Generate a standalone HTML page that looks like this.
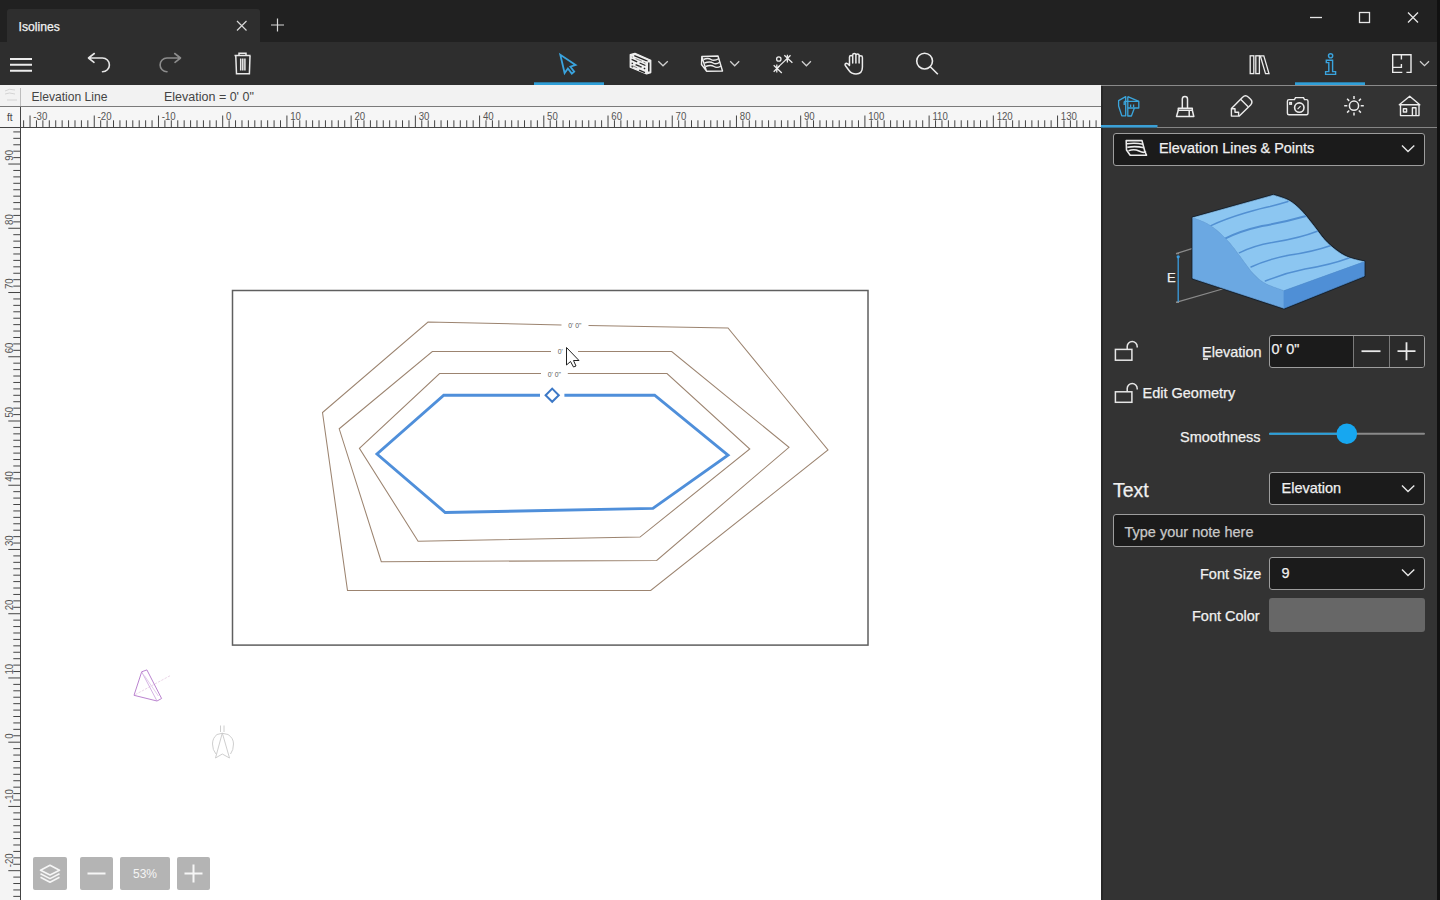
<!DOCTYPE html>
<html><head><meta charset="utf-8"><title>Isolines</title>
<style>
*{box-sizing:border-box;margin:0;padding:0}
html,body{width:1440px;height:900px;overflow:hidden;background:#202020;font-family:"Liberation Sans",sans-serif}
.abs{position:absolute}
#titlebar{position:absolute;left:0;top:0;width:1440px;height:42px;background:#212121}
#tab{position:absolute;left:7px;top:9px;width:253px;height:34px;background:#2e2e2e;border-radius:3px 3px 0 0}
#toolbar{position:absolute;left:0;top:42px;width:1440px;height:43px;background:#2e2e2e}
#canvasarea{position:absolute;left:0;top:85px;width:1101px;height:815px;background:#fff;overflow:hidden}
#panel{position:absolute;left:1101px;top:85px;width:336px;height:815px;background:#333}
#rightedge{position:absolute;left:1437px;top:0;width:3px;height:900px;background:#111}
.lbl{position:absolute;color:#f0f0f0;font-size:14.5px;white-space:nowrap;-webkit-text-stroke:0.25px currentColor}
.dd{position:absolute;background:#1b1b1b;border:1px solid #9d9d9d;border-radius:3px}
svg{position:absolute;overflow:visible}
</style></head><body>
<div id="titlebar"></div>
<div id="tab"></div>
<div class="lbl" style="left:18.5px;top:19.5px;font-size:12.2px;color:#f2f2f2">Isolines</div>
<svg style="left:0;top:0" width="1440" height="42">
 <g stroke="#d8d8d8" stroke-width="1.2" fill="none">
  <path d="M237 21 L246.5 30.5 M246.5 21 L237 30.5"/>
  <path d="M277.5 18.5 V31.5 M271 25 H284"/>
 </g>
 <g stroke="#e6e6e6" stroke-width="1.3" fill="none">
  <path d="M1310 17.5 H1322"/>
  <rect x="1359.5" y="12.5" width="10" height="10"/>
  <path d="M1408 12.5 L1418 22.5 M1418 12.5 L1408 22.5"/>
 </g>
</svg>
<div id="toolbar"></div>
<div id="canvasarea">
<svg style="left:0;top:-85px" width="1101" height="900">
 <rect x="0" y="85" width="1101" height="22" fill="#f2f2f2"/>
 <rect x="0" y="107" width="1101" height="21" fill="#f6f6f6"/>
 <rect x="0" y="128" width="20.5" height="772" fill="#f4f4f4"/>
 <line x1="0" y1="106.5" x2="1101" y2="106.5" stroke="#7a7a7a" stroke-width="1"/>
 <line x1="0" y1="127.5" x2="1101" y2="127.5" stroke="#444" stroke-width="1"/>
 <line x1="20.5" y1="107" x2="20.5" y2="900" stroke="#444" stroke-width="1"/>
 <line x1="20.5" y1="88" x2="20.5" y2="106" stroke="#bdbdbd" stroke-width="1"/>
 <text x="31.5" y="101" font-size="12.1" fill="#444">Elevation Line</text>
 <text x="164" y="101" font-size="12.5" fill="#444">Elevation = 0' 0"</text>
 <text x="7" y="121" font-size="10" fill="#444">ft</text>
 <g font-family="Liberation Sans">
 <line x1="23.62" y1="120.3" x2="23.62" y2="128" stroke="#444" stroke-width="1"/>
<line x1="30.04" y1="115.5" x2="30.04" y2="128" stroke="#444" stroke-width="1"/>
<text transform="translate(33.34 120.3) scale(0.84 1)" font-size="11.5" fill="#555">-30</text>
<line x1="36.46" y1="120.3" x2="36.46" y2="128" stroke="#444" stroke-width="1"/>
<line x1="42.88" y1="120.3" x2="42.88" y2="128" stroke="#444" stroke-width="1"/>
<line x1="49.31" y1="120.3" x2="49.31" y2="128" stroke="#444" stroke-width="1"/>
<line x1="55.73" y1="120.3" x2="55.73" y2="128" stroke="#444" stroke-width="1"/>
<line x1="62.15" y1="120.3" x2="62.15" y2="128" stroke="#444" stroke-width="1"/>
<line x1="68.57" y1="120.3" x2="68.57" y2="128" stroke="#444" stroke-width="1"/>
<line x1="74.99" y1="120.3" x2="74.99" y2="128" stroke="#444" stroke-width="1"/>
<line x1="81.42" y1="120.3" x2="81.42" y2="128" stroke="#444" stroke-width="1"/>
<line x1="87.84" y1="120.3" x2="87.84" y2="128" stroke="#444" stroke-width="1"/>
<line x1="94.26" y1="115.5" x2="94.26" y2="128" stroke="#444" stroke-width="1"/>
<text transform="translate(97.56 120.3) scale(0.84 1)" font-size="11.5" fill="#555">-20</text>
<line x1="100.68" y1="120.3" x2="100.68" y2="128" stroke="#444" stroke-width="1"/>
<line x1="107.10" y1="120.3" x2="107.10" y2="128" stroke="#444" stroke-width="1"/>
<line x1="113.53" y1="120.3" x2="113.53" y2="128" stroke="#444" stroke-width="1"/>
<line x1="119.95" y1="120.3" x2="119.95" y2="128" stroke="#444" stroke-width="1"/>
<line x1="126.37" y1="120.3" x2="126.37" y2="128" stroke="#444" stroke-width="1"/>
<line x1="132.79" y1="120.3" x2="132.79" y2="128" stroke="#444" stroke-width="1"/>
<line x1="139.21" y1="120.3" x2="139.21" y2="128" stroke="#444" stroke-width="1"/>
<line x1="145.64" y1="120.3" x2="145.64" y2="128" stroke="#444" stroke-width="1"/>
<line x1="152.06" y1="120.3" x2="152.06" y2="128" stroke="#444" stroke-width="1"/>
<line x1="158.48" y1="115.5" x2="158.48" y2="128" stroke="#444" stroke-width="1"/>
<text transform="translate(161.78 120.3) scale(0.84 1)" font-size="11.5" fill="#555">-10</text>
<line x1="164.90" y1="120.3" x2="164.90" y2="128" stroke="#444" stroke-width="1"/>
<line x1="171.32" y1="120.3" x2="171.32" y2="128" stroke="#444" stroke-width="1"/>
<line x1="177.75" y1="120.3" x2="177.75" y2="128" stroke="#444" stroke-width="1"/>
<line x1="184.17" y1="120.3" x2="184.17" y2="128" stroke="#444" stroke-width="1"/>
<line x1="190.59" y1="120.3" x2="190.59" y2="128" stroke="#444" stroke-width="1"/>
<line x1="197.01" y1="120.3" x2="197.01" y2="128" stroke="#444" stroke-width="1"/>
<line x1="203.43" y1="120.3" x2="203.43" y2="128" stroke="#444" stroke-width="1"/>
<line x1="209.86" y1="120.3" x2="209.86" y2="128" stroke="#444" stroke-width="1"/>
<line x1="216.28" y1="120.3" x2="216.28" y2="128" stroke="#444" stroke-width="1"/>
<line x1="222.70" y1="115.5" x2="222.70" y2="128" stroke="#444" stroke-width="1"/>
<text transform="translate(226.00 120.3) scale(0.84 1)" font-size="11.5" fill="#555">0</text>
<line x1="229.12" y1="120.3" x2="229.12" y2="128" stroke="#444" stroke-width="1"/>
<line x1="235.54" y1="120.3" x2="235.54" y2="128" stroke="#444" stroke-width="1"/>
<line x1="241.97" y1="120.3" x2="241.97" y2="128" stroke="#444" stroke-width="1"/>
<line x1="248.39" y1="120.3" x2="248.39" y2="128" stroke="#444" stroke-width="1"/>
<line x1="254.81" y1="120.3" x2="254.81" y2="128" stroke="#444" stroke-width="1"/>
<line x1="261.23" y1="120.3" x2="261.23" y2="128" stroke="#444" stroke-width="1"/>
<line x1="267.65" y1="120.3" x2="267.65" y2="128" stroke="#444" stroke-width="1"/>
<line x1="274.08" y1="120.3" x2="274.08" y2="128" stroke="#444" stroke-width="1"/>
<line x1="280.50" y1="120.3" x2="280.50" y2="128" stroke="#444" stroke-width="1"/>
<line x1="286.92" y1="115.5" x2="286.92" y2="128" stroke="#444" stroke-width="1"/>
<text transform="translate(290.22 120.3) scale(0.84 1)" font-size="11.5" fill="#555">10</text>
<line x1="293.34" y1="120.3" x2="293.34" y2="128" stroke="#444" stroke-width="1"/>
<line x1="299.76" y1="120.3" x2="299.76" y2="128" stroke="#444" stroke-width="1"/>
<line x1="306.19" y1="120.3" x2="306.19" y2="128" stroke="#444" stroke-width="1"/>
<line x1="312.61" y1="120.3" x2="312.61" y2="128" stroke="#444" stroke-width="1"/>
<line x1="319.03" y1="120.3" x2="319.03" y2="128" stroke="#444" stroke-width="1"/>
<line x1="325.45" y1="120.3" x2="325.45" y2="128" stroke="#444" stroke-width="1"/>
<line x1="331.87" y1="120.3" x2="331.87" y2="128" stroke="#444" stroke-width="1"/>
<line x1="338.30" y1="120.3" x2="338.30" y2="128" stroke="#444" stroke-width="1"/>
<line x1="344.72" y1="120.3" x2="344.72" y2="128" stroke="#444" stroke-width="1"/>
<line x1="351.14" y1="115.5" x2="351.14" y2="128" stroke="#444" stroke-width="1"/>
<text transform="translate(354.44 120.3) scale(0.84 1)" font-size="11.5" fill="#555">20</text>
<line x1="357.56" y1="120.3" x2="357.56" y2="128" stroke="#444" stroke-width="1"/>
<line x1="363.98" y1="120.3" x2="363.98" y2="128" stroke="#444" stroke-width="1"/>
<line x1="370.41" y1="120.3" x2="370.41" y2="128" stroke="#444" stroke-width="1"/>
<line x1="376.83" y1="120.3" x2="376.83" y2="128" stroke="#444" stroke-width="1"/>
<line x1="383.25" y1="120.3" x2="383.25" y2="128" stroke="#444" stroke-width="1"/>
<line x1="389.67" y1="120.3" x2="389.67" y2="128" stroke="#444" stroke-width="1"/>
<line x1="396.09" y1="120.3" x2="396.09" y2="128" stroke="#444" stroke-width="1"/>
<line x1="402.52" y1="120.3" x2="402.52" y2="128" stroke="#444" stroke-width="1"/>
<line x1="408.94" y1="120.3" x2="408.94" y2="128" stroke="#444" stroke-width="1"/>
<line x1="415.36" y1="115.5" x2="415.36" y2="128" stroke="#444" stroke-width="1"/>
<text transform="translate(418.66 120.3) scale(0.84 1)" font-size="11.5" fill="#555">30</text>
<line x1="421.78" y1="120.3" x2="421.78" y2="128" stroke="#444" stroke-width="1"/>
<line x1="428.20" y1="120.3" x2="428.20" y2="128" stroke="#444" stroke-width="1"/>
<line x1="434.63" y1="120.3" x2="434.63" y2="128" stroke="#444" stroke-width="1"/>
<line x1="441.05" y1="120.3" x2="441.05" y2="128" stroke="#444" stroke-width="1"/>
<line x1="447.47" y1="120.3" x2="447.47" y2="128" stroke="#444" stroke-width="1"/>
<line x1="453.89" y1="120.3" x2="453.89" y2="128" stroke="#444" stroke-width="1"/>
<line x1="460.31" y1="120.3" x2="460.31" y2="128" stroke="#444" stroke-width="1"/>
<line x1="466.74" y1="120.3" x2="466.74" y2="128" stroke="#444" stroke-width="1"/>
<line x1="473.16" y1="120.3" x2="473.16" y2="128" stroke="#444" stroke-width="1"/>
<line x1="479.58" y1="115.5" x2="479.58" y2="128" stroke="#444" stroke-width="1"/>
<text transform="translate(482.88 120.3) scale(0.84 1)" font-size="11.5" fill="#555">40</text>
<line x1="486.00" y1="120.3" x2="486.00" y2="128" stroke="#444" stroke-width="1"/>
<line x1="492.42" y1="120.3" x2="492.42" y2="128" stroke="#444" stroke-width="1"/>
<line x1="498.85" y1="120.3" x2="498.85" y2="128" stroke="#444" stroke-width="1"/>
<line x1="505.27" y1="120.3" x2="505.27" y2="128" stroke="#444" stroke-width="1"/>
<line x1="511.69" y1="120.3" x2="511.69" y2="128" stroke="#444" stroke-width="1"/>
<line x1="518.11" y1="120.3" x2="518.11" y2="128" stroke="#444" stroke-width="1"/>
<line x1="524.53" y1="120.3" x2="524.53" y2="128" stroke="#444" stroke-width="1"/>
<line x1="530.96" y1="120.3" x2="530.96" y2="128" stroke="#444" stroke-width="1"/>
<line x1="537.38" y1="120.3" x2="537.38" y2="128" stroke="#444" stroke-width="1"/>
<line x1="543.80" y1="115.5" x2="543.80" y2="128" stroke="#444" stroke-width="1"/>
<text transform="translate(547.10 120.3) scale(0.84 1)" font-size="11.5" fill="#555">50</text>
<line x1="550.22" y1="120.3" x2="550.22" y2="128" stroke="#444" stroke-width="1"/>
<line x1="556.64" y1="120.3" x2="556.64" y2="128" stroke="#444" stroke-width="1"/>
<line x1="563.07" y1="120.3" x2="563.07" y2="128" stroke="#444" stroke-width="1"/>
<line x1="569.49" y1="120.3" x2="569.49" y2="128" stroke="#444" stroke-width="1"/>
<line x1="575.91" y1="120.3" x2="575.91" y2="128" stroke="#444" stroke-width="1"/>
<line x1="582.33" y1="120.3" x2="582.33" y2="128" stroke="#444" stroke-width="1"/>
<line x1="588.75" y1="120.3" x2="588.75" y2="128" stroke="#444" stroke-width="1"/>
<line x1="595.18" y1="120.3" x2="595.18" y2="128" stroke="#444" stroke-width="1"/>
<line x1="601.60" y1="120.3" x2="601.60" y2="128" stroke="#444" stroke-width="1"/>
<line x1="608.02" y1="115.5" x2="608.02" y2="128" stroke="#444" stroke-width="1"/>
<text transform="translate(611.32 120.3) scale(0.84 1)" font-size="11.5" fill="#555">60</text>
<line x1="614.44" y1="120.3" x2="614.44" y2="128" stroke="#444" stroke-width="1"/>
<line x1="620.86" y1="120.3" x2="620.86" y2="128" stroke="#444" stroke-width="1"/>
<line x1="627.29" y1="120.3" x2="627.29" y2="128" stroke="#444" stroke-width="1"/>
<line x1="633.71" y1="120.3" x2="633.71" y2="128" stroke="#444" stroke-width="1"/>
<line x1="640.13" y1="120.3" x2="640.13" y2="128" stroke="#444" stroke-width="1"/>
<line x1="646.55" y1="120.3" x2="646.55" y2="128" stroke="#444" stroke-width="1"/>
<line x1="652.97" y1="120.3" x2="652.97" y2="128" stroke="#444" stroke-width="1"/>
<line x1="659.40" y1="120.3" x2="659.40" y2="128" stroke="#444" stroke-width="1"/>
<line x1="665.82" y1="120.3" x2="665.82" y2="128" stroke="#444" stroke-width="1"/>
<line x1="672.24" y1="115.5" x2="672.24" y2="128" stroke="#444" stroke-width="1"/>
<text transform="translate(675.54 120.3) scale(0.84 1)" font-size="11.5" fill="#555">70</text>
<line x1="678.66" y1="120.3" x2="678.66" y2="128" stroke="#444" stroke-width="1"/>
<line x1="685.08" y1="120.3" x2="685.08" y2="128" stroke="#444" stroke-width="1"/>
<line x1="691.51" y1="120.3" x2="691.51" y2="128" stroke="#444" stroke-width="1"/>
<line x1="697.93" y1="120.3" x2="697.93" y2="128" stroke="#444" stroke-width="1"/>
<line x1="704.35" y1="120.3" x2="704.35" y2="128" stroke="#444" stroke-width="1"/>
<line x1="710.77" y1="120.3" x2="710.77" y2="128" stroke="#444" stroke-width="1"/>
<line x1="717.19" y1="120.3" x2="717.19" y2="128" stroke="#444" stroke-width="1"/>
<line x1="723.62" y1="120.3" x2="723.62" y2="128" stroke="#444" stroke-width="1"/>
<line x1="730.04" y1="120.3" x2="730.04" y2="128" stroke="#444" stroke-width="1"/>
<line x1="736.46" y1="115.5" x2="736.46" y2="128" stroke="#444" stroke-width="1"/>
<text transform="translate(739.76 120.3) scale(0.84 1)" font-size="11.5" fill="#555">80</text>
<line x1="742.88" y1="120.3" x2="742.88" y2="128" stroke="#444" stroke-width="1"/>
<line x1="749.30" y1="120.3" x2="749.30" y2="128" stroke="#444" stroke-width="1"/>
<line x1="755.73" y1="120.3" x2="755.73" y2="128" stroke="#444" stroke-width="1"/>
<line x1="762.15" y1="120.3" x2="762.15" y2="128" stroke="#444" stroke-width="1"/>
<line x1="768.57" y1="120.3" x2="768.57" y2="128" stroke="#444" stroke-width="1"/>
<line x1="774.99" y1="120.3" x2="774.99" y2="128" stroke="#444" stroke-width="1"/>
<line x1="781.41" y1="120.3" x2="781.41" y2="128" stroke="#444" stroke-width="1"/>
<line x1="787.84" y1="120.3" x2="787.84" y2="128" stroke="#444" stroke-width="1"/>
<line x1="794.26" y1="120.3" x2="794.26" y2="128" stroke="#444" stroke-width="1"/>
<line x1="800.68" y1="115.5" x2="800.68" y2="128" stroke="#444" stroke-width="1"/>
<text transform="translate(803.98 120.3) scale(0.84 1)" font-size="11.5" fill="#555">90</text>
<line x1="807.10" y1="120.3" x2="807.10" y2="128" stroke="#444" stroke-width="1"/>
<line x1="813.52" y1="120.3" x2="813.52" y2="128" stroke="#444" stroke-width="1"/>
<line x1="819.95" y1="120.3" x2="819.95" y2="128" stroke="#444" stroke-width="1"/>
<line x1="826.37" y1="120.3" x2="826.37" y2="128" stroke="#444" stroke-width="1"/>
<line x1="832.79" y1="120.3" x2="832.79" y2="128" stroke="#444" stroke-width="1"/>
<line x1="839.21" y1="120.3" x2="839.21" y2="128" stroke="#444" stroke-width="1"/>
<line x1="845.63" y1="120.3" x2="845.63" y2="128" stroke="#444" stroke-width="1"/>
<line x1="852.06" y1="120.3" x2="852.06" y2="128" stroke="#444" stroke-width="1"/>
<line x1="858.48" y1="120.3" x2="858.48" y2="128" stroke="#444" stroke-width="1"/>
<line x1="864.90" y1="115.5" x2="864.90" y2="128" stroke="#444" stroke-width="1"/>
<text transform="translate(868.20 120.3) scale(0.84 1)" font-size="11.5" fill="#555">100</text>
<line x1="871.32" y1="120.3" x2="871.32" y2="128" stroke="#444" stroke-width="1"/>
<line x1="877.74" y1="120.3" x2="877.74" y2="128" stroke="#444" stroke-width="1"/>
<line x1="884.17" y1="120.3" x2="884.17" y2="128" stroke="#444" stroke-width="1"/>
<line x1="890.59" y1="120.3" x2="890.59" y2="128" stroke="#444" stroke-width="1"/>
<line x1="897.01" y1="120.3" x2="897.01" y2="128" stroke="#444" stroke-width="1"/>
<line x1="903.43" y1="120.3" x2="903.43" y2="128" stroke="#444" stroke-width="1"/>
<line x1="909.85" y1="120.3" x2="909.85" y2="128" stroke="#444" stroke-width="1"/>
<line x1="916.28" y1="120.3" x2="916.28" y2="128" stroke="#444" stroke-width="1"/>
<line x1="922.70" y1="120.3" x2="922.70" y2="128" stroke="#444" stroke-width="1"/>
<line x1="929.12" y1="115.5" x2="929.12" y2="128" stroke="#444" stroke-width="1"/>
<text transform="translate(932.42 120.3) scale(0.84 1)" font-size="11.5" fill="#555">110</text>
<line x1="935.54" y1="120.3" x2="935.54" y2="128" stroke="#444" stroke-width="1"/>
<line x1="941.96" y1="120.3" x2="941.96" y2="128" stroke="#444" stroke-width="1"/>
<line x1="948.39" y1="120.3" x2="948.39" y2="128" stroke="#444" stroke-width="1"/>
<line x1="954.81" y1="120.3" x2="954.81" y2="128" stroke="#444" stroke-width="1"/>
<line x1="961.23" y1="120.3" x2="961.23" y2="128" stroke="#444" stroke-width="1"/>
<line x1="967.65" y1="120.3" x2="967.65" y2="128" stroke="#444" stroke-width="1"/>
<line x1="974.07" y1="120.3" x2="974.07" y2="128" stroke="#444" stroke-width="1"/>
<line x1="980.50" y1="120.3" x2="980.50" y2="128" stroke="#444" stroke-width="1"/>
<line x1="986.92" y1="120.3" x2="986.92" y2="128" stroke="#444" stroke-width="1"/>
<line x1="993.34" y1="115.5" x2="993.34" y2="128" stroke="#444" stroke-width="1"/>
<text transform="translate(996.64 120.3) scale(0.84 1)" font-size="11.5" fill="#555">120</text>
<line x1="999.76" y1="120.3" x2="999.76" y2="128" stroke="#444" stroke-width="1"/>
<line x1="1006.18" y1="120.3" x2="1006.18" y2="128" stroke="#444" stroke-width="1"/>
<line x1="1012.61" y1="120.3" x2="1012.61" y2="128" stroke="#444" stroke-width="1"/>
<line x1="1019.03" y1="120.3" x2="1019.03" y2="128" stroke="#444" stroke-width="1"/>
<line x1="1025.45" y1="120.3" x2="1025.45" y2="128" stroke="#444" stroke-width="1"/>
<line x1="1031.87" y1="120.3" x2="1031.87" y2="128" stroke="#444" stroke-width="1"/>
<line x1="1038.29" y1="120.3" x2="1038.29" y2="128" stroke="#444" stroke-width="1"/>
<line x1="1044.72" y1="120.3" x2="1044.72" y2="128" stroke="#444" stroke-width="1"/>
<line x1="1051.14" y1="120.3" x2="1051.14" y2="128" stroke="#444" stroke-width="1"/>
<line x1="1057.56" y1="115.5" x2="1057.56" y2="128" stroke="#444" stroke-width="1"/>
<text transform="translate(1060.86 120.3) scale(0.84 1)" font-size="11.5" fill="#555">130</text>
<line x1="1063.98" y1="120.3" x2="1063.98" y2="128" stroke="#444" stroke-width="1"/>
<line x1="1070.40" y1="120.3" x2="1070.40" y2="128" stroke="#444" stroke-width="1"/>
<line x1="1076.83" y1="120.3" x2="1076.83" y2="128" stroke="#444" stroke-width="1"/>
<line x1="1083.25" y1="120.3" x2="1083.25" y2="128" stroke="#444" stroke-width="1"/>
<line x1="1089.67" y1="120.3" x2="1089.67" y2="128" stroke="#444" stroke-width="1"/>
<line x1="1096.09" y1="120.3" x2="1096.09" y2="128" stroke="#444" stroke-width="1"/>
 <line x1="13.3" y1="896.38" x2="21" y2="896.38" stroke="#444" stroke-width="1"/>
<line x1="13.3" y1="889.95" x2="21" y2="889.95" stroke="#444" stroke-width="1"/>
<line x1="13.3" y1="883.53" x2="21" y2="883.53" stroke="#444" stroke-width="1"/>
<line x1="13.3" y1="877.10" x2="21" y2="877.10" stroke="#444" stroke-width="1"/>
<line x1="8.3" y1="870.68" x2="21" y2="870.68" stroke="#444" stroke-width="1"/>
<text transform="translate(12.8 867.28) rotate(-90) scale(0.84 1)" font-size="11.5" fill="#555">-20</text>
<line x1="13.3" y1="864.26" x2="21" y2="864.26" stroke="#444" stroke-width="1"/>
<line x1="13.3" y1="857.83" x2="21" y2="857.83" stroke="#444" stroke-width="1"/>
<line x1="13.3" y1="851.41" x2="21" y2="851.41" stroke="#444" stroke-width="1"/>
<line x1="13.3" y1="844.98" x2="21" y2="844.98" stroke="#444" stroke-width="1"/>
<line x1="13.3" y1="838.56" x2="21" y2="838.56" stroke="#444" stroke-width="1"/>
<line x1="13.3" y1="832.14" x2="21" y2="832.14" stroke="#444" stroke-width="1"/>
<line x1="13.3" y1="825.71" x2="21" y2="825.71" stroke="#444" stroke-width="1"/>
<line x1="13.3" y1="819.29" x2="21" y2="819.29" stroke="#444" stroke-width="1"/>
<line x1="13.3" y1="812.86" x2="21" y2="812.86" stroke="#444" stroke-width="1"/>
<line x1="8.3" y1="806.44" x2="21" y2="806.44" stroke="#444" stroke-width="1"/>
<text transform="translate(12.8 803.04) rotate(-90) scale(0.84 1)" font-size="11.5" fill="#555">-10</text>
<line x1="13.3" y1="800.02" x2="21" y2="800.02" stroke="#444" stroke-width="1"/>
<line x1="13.3" y1="793.59" x2="21" y2="793.59" stroke="#444" stroke-width="1"/>
<line x1="13.3" y1="787.17" x2="21" y2="787.17" stroke="#444" stroke-width="1"/>
<line x1="13.3" y1="780.74" x2="21" y2="780.74" stroke="#444" stroke-width="1"/>
<line x1="13.3" y1="774.32" x2="21" y2="774.32" stroke="#444" stroke-width="1"/>
<line x1="13.3" y1="767.90" x2="21" y2="767.90" stroke="#444" stroke-width="1"/>
<line x1="13.3" y1="761.47" x2="21" y2="761.47" stroke="#444" stroke-width="1"/>
<line x1="13.3" y1="755.05" x2="21" y2="755.05" stroke="#444" stroke-width="1"/>
<line x1="13.3" y1="748.62" x2="21" y2="748.62" stroke="#444" stroke-width="1"/>
<line x1="8.3" y1="742.20" x2="21" y2="742.20" stroke="#444" stroke-width="1"/>
<text transform="translate(12.8 738.80) rotate(-90) scale(0.84 1)" font-size="11.5" fill="#555">0</text>
<line x1="13.3" y1="735.78" x2="21" y2="735.78" stroke="#444" stroke-width="1"/>
<line x1="13.3" y1="729.35" x2="21" y2="729.35" stroke="#444" stroke-width="1"/>
<line x1="13.3" y1="722.93" x2="21" y2="722.93" stroke="#444" stroke-width="1"/>
<line x1="13.3" y1="716.50" x2="21" y2="716.50" stroke="#444" stroke-width="1"/>
<line x1="13.3" y1="710.08" x2="21" y2="710.08" stroke="#444" stroke-width="1"/>
<line x1="13.3" y1="703.66" x2="21" y2="703.66" stroke="#444" stroke-width="1"/>
<line x1="13.3" y1="697.23" x2="21" y2="697.23" stroke="#444" stroke-width="1"/>
<line x1="13.3" y1="690.81" x2="21" y2="690.81" stroke="#444" stroke-width="1"/>
<line x1="13.3" y1="684.38" x2="21" y2="684.38" stroke="#444" stroke-width="1"/>
<line x1="8.3" y1="677.96" x2="21" y2="677.96" stroke="#444" stroke-width="1"/>
<text transform="translate(12.8 674.56) rotate(-90) scale(0.84 1)" font-size="11.5" fill="#555">10</text>
<line x1="13.3" y1="671.54" x2="21" y2="671.54" stroke="#444" stroke-width="1"/>
<line x1="13.3" y1="665.11" x2="21" y2="665.11" stroke="#444" stroke-width="1"/>
<line x1="13.3" y1="658.69" x2="21" y2="658.69" stroke="#444" stroke-width="1"/>
<line x1="13.3" y1="652.26" x2="21" y2="652.26" stroke="#444" stroke-width="1"/>
<line x1="13.3" y1="645.84" x2="21" y2="645.84" stroke="#444" stroke-width="1"/>
<line x1="13.3" y1="639.42" x2="21" y2="639.42" stroke="#444" stroke-width="1"/>
<line x1="13.3" y1="632.99" x2="21" y2="632.99" stroke="#444" stroke-width="1"/>
<line x1="13.3" y1="626.57" x2="21" y2="626.57" stroke="#444" stroke-width="1"/>
<line x1="13.3" y1="620.14" x2="21" y2="620.14" stroke="#444" stroke-width="1"/>
<line x1="8.3" y1="613.72" x2="21" y2="613.72" stroke="#444" stroke-width="1"/>
<text transform="translate(12.8 610.32) rotate(-90) scale(0.84 1)" font-size="11.5" fill="#555">20</text>
<line x1="13.3" y1="607.30" x2="21" y2="607.30" stroke="#444" stroke-width="1"/>
<line x1="13.3" y1="600.87" x2="21" y2="600.87" stroke="#444" stroke-width="1"/>
<line x1="13.3" y1="594.45" x2="21" y2="594.45" stroke="#444" stroke-width="1"/>
<line x1="13.3" y1="588.02" x2="21" y2="588.02" stroke="#444" stroke-width="1"/>
<line x1="13.3" y1="581.60" x2="21" y2="581.60" stroke="#444" stroke-width="1"/>
<line x1="13.3" y1="575.18" x2="21" y2="575.18" stroke="#444" stroke-width="1"/>
<line x1="13.3" y1="568.75" x2="21" y2="568.75" stroke="#444" stroke-width="1"/>
<line x1="13.3" y1="562.33" x2="21" y2="562.33" stroke="#444" stroke-width="1"/>
<line x1="13.3" y1="555.90" x2="21" y2="555.90" stroke="#444" stroke-width="1"/>
<line x1="8.3" y1="549.48" x2="21" y2="549.48" stroke="#444" stroke-width="1"/>
<text transform="translate(12.8 546.08) rotate(-90) scale(0.84 1)" font-size="11.5" fill="#555">30</text>
<line x1="13.3" y1="543.06" x2="21" y2="543.06" stroke="#444" stroke-width="1"/>
<line x1="13.3" y1="536.63" x2="21" y2="536.63" stroke="#444" stroke-width="1"/>
<line x1="13.3" y1="530.21" x2="21" y2="530.21" stroke="#444" stroke-width="1"/>
<line x1="13.3" y1="523.78" x2="21" y2="523.78" stroke="#444" stroke-width="1"/>
<line x1="13.3" y1="517.36" x2="21" y2="517.36" stroke="#444" stroke-width="1"/>
<line x1="13.3" y1="510.94" x2="21" y2="510.94" stroke="#444" stroke-width="1"/>
<line x1="13.3" y1="504.51" x2="21" y2="504.51" stroke="#444" stroke-width="1"/>
<line x1="13.3" y1="498.09" x2="21" y2="498.09" stroke="#444" stroke-width="1"/>
<line x1="13.3" y1="491.66" x2="21" y2="491.66" stroke="#444" stroke-width="1"/>
<line x1="8.3" y1="485.24" x2="21" y2="485.24" stroke="#444" stroke-width="1"/>
<text transform="translate(12.8 481.84) rotate(-90) scale(0.84 1)" font-size="11.5" fill="#555">40</text>
<line x1="13.3" y1="478.82" x2="21" y2="478.82" stroke="#444" stroke-width="1"/>
<line x1="13.3" y1="472.39" x2="21" y2="472.39" stroke="#444" stroke-width="1"/>
<line x1="13.3" y1="465.97" x2="21" y2="465.97" stroke="#444" stroke-width="1"/>
<line x1="13.3" y1="459.54" x2="21" y2="459.54" stroke="#444" stroke-width="1"/>
<line x1="13.3" y1="453.12" x2="21" y2="453.12" stroke="#444" stroke-width="1"/>
<line x1="13.3" y1="446.70" x2="21" y2="446.70" stroke="#444" stroke-width="1"/>
<line x1="13.3" y1="440.27" x2="21" y2="440.27" stroke="#444" stroke-width="1"/>
<line x1="13.3" y1="433.85" x2="21" y2="433.85" stroke="#444" stroke-width="1"/>
<line x1="13.3" y1="427.42" x2="21" y2="427.42" stroke="#444" stroke-width="1"/>
<line x1="8.3" y1="421.00" x2="21" y2="421.00" stroke="#444" stroke-width="1"/>
<text transform="translate(12.8 417.60) rotate(-90) scale(0.84 1)" font-size="11.5" fill="#555">50</text>
<line x1="13.3" y1="414.58" x2="21" y2="414.58" stroke="#444" stroke-width="1"/>
<line x1="13.3" y1="408.15" x2="21" y2="408.15" stroke="#444" stroke-width="1"/>
<line x1="13.3" y1="401.73" x2="21" y2="401.73" stroke="#444" stroke-width="1"/>
<line x1="13.3" y1="395.30" x2="21" y2="395.30" stroke="#444" stroke-width="1"/>
<line x1="13.3" y1="388.88" x2="21" y2="388.88" stroke="#444" stroke-width="1"/>
<line x1="13.3" y1="382.46" x2="21" y2="382.46" stroke="#444" stroke-width="1"/>
<line x1="13.3" y1="376.03" x2="21" y2="376.03" stroke="#444" stroke-width="1"/>
<line x1="13.3" y1="369.61" x2="21" y2="369.61" stroke="#444" stroke-width="1"/>
<line x1="13.3" y1="363.18" x2="21" y2="363.18" stroke="#444" stroke-width="1"/>
<line x1="8.3" y1="356.76" x2="21" y2="356.76" stroke="#444" stroke-width="1"/>
<text transform="translate(12.8 353.36) rotate(-90) scale(0.84 1)" font-size="11.5" fill="#555">60</text>
<line x1="13.3" y1="350.34" x2="21" y2="350.34" stroke="#444" stroke-width="1"/>
<line x1="13.3" y1="343.91" x2="21" y2="343.91" stroke="#444" stroke-width="1"/>
<line x1="13.3" y1="337.49" x2="21" y2="337.49" stroke="#444" stroke-width="1"/>
<line x1="13.3" y1="331.06" x2="21" y2="331.06" stroke="#444" stroke-width="1"/>
<line x1="13.3" y1="324.64" x2="21" y2="324.64" stroke="#444" stroke-width="1"/>
<line x1="13.3" y1="318.22" x2="21" y2="318.22" stroke="#444" stroke-width="1"/>
<line x1="13.3" y1="311.79" x2="21" y2="311.79" stroke="#444" stroke-width="1"/>
<line x1="13.3" y1="305.37" x2="21" y2="305.37" stroke="#444" stroke-width="1"/>
<line x1="13.3" y1="298.94" x2="21" y2="298.94" stroke="#444" stroke-width="1"/>
<line x1="8.3" y1="292.52" x2="21" y2="292.52" stroke="#444" stroke-width="1"/>
<text transform="translate(12.8 289.12) rotate(-90) scale(0.84 1)" font-size="11.5" fill="#555">70</text>
<line x1="13.3" y1="286.10" x2="21" y2="286.10" stroke="#444" stroke-width="1"/>
<line x1="13.3" y1="279.67" x2="21" y2="279.67" stroke="#444" stroke-width="1"/>
<line x1="13.3" y1="273.25" x2="21" y2="273.25" stroke="#444" stroke-width="1"/>
<line x1="13.3" y1="266.82" x2="21" y2="266.82" stroke="#444" stroke-width="1"/>
<line x1="13.3" y1="260.40" x2="21" y2="260.40" stroke="#444" stroke-width="1"/>
<line x1="13.3" y1="253.98" x2="21" y2="253.98" stroke="#444" stroke-width="1"/>
<line x1="13.3" y1="247.55" x2="21" y2="247.55" stroke="#444" stroke-width="1"/>
<line x1="13.3" y1="241.13" x2="21" y2="241.13" stroke="#444" stroke-width="1"/>
<line x1="13.3" y1="234.70" x2="21" y2="234.70" stroke="#444" stroke-width="1"/>
<line x1="8.3" y1="228.28" x2="21" y2="228.28" stroke="#444" stroke-width="1"/>
<text transform="translate(12.8 224.88) rotate(-90) scale(0.84 1)" font-size="11.5" fill="#555">80</text>
<line x1="13.3" y1="221.86" x2="21" y2="221.86" stroke="#444" stroke-width="1"/>
<line x1="13.3" y1="215.43" x2="21" y2="215.43" stroke="#444" stroke-width="1"/>
<line x1="13.3" y1="209.01" x2="21" y2="209.01" stroke="#444" stroke-width="1"/>
<line x1="13.3" y1="202.58" x2="21" y2="202.58" stroke="#444" stroke-width="1"/>
<line x1="13.3" y1="196.16" x2="21" y2="196.16" stroke="#444" stroke-width="1"/>
<line x1="13.3" y1="189.74" x2="21" y2="189.74" stroke="#444" stroke-width="1"/>
<line x1="13.3" y1="183.31" x2="21" y2="183.31" stroke="#444" stroke-width="1"/>
<line x1="13.3" y1="176.89" x2="21" y2="176.89" stroke="#444" stroke-width="1"/>
<line x1="13.3" y1="170.46" x2="21" y2="170.46" stroke="#444" stroke-width="1"/>
<line x1="8.3" y1="164.04" x2="21" y2="164.04" stroke="#444" stroke-width="1"/>
<text transform="translate(12.8 160.64) rotate(-90) scale(0.84 1)" font-size="11.5" fill="#555">90</text>
<line x1="13.3" y1="157.62" x2="21" y2="157.62" stroke="#444" stroke-width="1"/>
<line x1="13.3" y1="151.19" x2="21" y2="151.19" stroke="#444" stroke-width="1"/>
<line x1="13.3" y1="144.77" x2="21" y2="144.77" stroke="#444" stroke-width="1"/>
<line x1="13.3" y1="138.34" x2="21" y2="138.34" stroke="#444" stroke-width="1"/>
<line x1="13.3" y1="131.92" x2="21" y2="131.92" stroke="#444" stroke-width="1"/>
 </g>
 <rect x="232.5" y="290.5" width="635.5" height="354.6" fill="none" stroke="#5f5f5f" stroke-width="1.5"/>
 <g fill="none" stroke="#9c8470" stroke-width="1.05">
  <path d="M561.5 325 L428 322 L322.5 412.5 L347.5 590.5 L650.7 590.5 L828 450 L728 328 L588.5 325.5"/>
  <path d="M551 351.5 L432.3 351.5 L339.2 428.8 L381.3 561.7 L656.7 560.4 L789 447.3 L671.7 351.5 L578 351.5"/>
  <path d="M541 373.5 L439.6 373.5 L359.4 448.3 L418.1 541.2 L640 537.1 L749.8 449 L667 373.5 L567.8 373.5"/>
 </g>
 <path d="M540 395.2 L443.8 395.2 L377 454 L445.2 512.5 L652.9 508.4 L728 455.2 L654.6 395.2 L564.4 395.2" fill="none" stroke="#4f8fda" stroke-width="2.9" stroke-linejoin="miter"/>
 <path d="M552.2 388.6 L558.8 395.2 L552.2 401.8 L545.6 395.2 Z" fill="#fff" stroke="#3c78c6" stroke-width="2"/>
 <g font-size="6.8" fill="#5a5a5a">
  <text x="568.3" y="328.3">0' 0"</text>
  <text x="557.8" y="353.9">0'</text>
  <text x="547.8" y="376.5">0' 0"</text>
 </g>
 <path d="M566.5 347.5 L566.5 365 L570.5 361.5 L573.5 367 L576 366 L573.5 360.5 L579 360.5 Z" fill="#fff" stroke="#222" stroke-width="1"/>

 <!-- camera -->
 <g fill="none" stroke-linejoin="round">
  <path d="M135.3 694.6 L170.5 675.5" stroke="#e8d0e4" stroke-width="0.9" stroke-dasharray="2.5 1.2"/>
  <path d="M141.7 671.8 L146.9 669.9 L161.6 698.5 L157 701 L134 695.3 Z" stroke="#b67ccc" stroke-width="0.95"/>
  <path d="M141.7 671.8 L157 701" stroke="#c9a0dc" stroke-width="0.8"/>
  <path d="M144.3 675.5 L158.4 696" stroke="#dcc0e6" stroke-width="0.8"/>
 </g>
 <!-- person -->
 <g fill="none" stroke="#c8c8c8" stroke-width="0.9">
  <path d="M220.5 725.5 V732 M224 725.5 V732"/>
  <path d="M217 734.5 Q212.5 738 212.5 744 Q212.5 750 216 754 M228 734.5 Q233.5 738 233.5 744 Q233.5 750 230.5 754"/>
  <path d="M222.3 733 L215.5 758 L222.3 754 L229.5 758 Z"/>
  <path d="M217 734.5 Q222 732 228 734.5"/>
 </g>
 <!-- status icon -->
 <g fill="none" stroke="#d0d0d0" stroke-width="0.9">
  <path d="M5 91 Q9 88 15 90 M5 94 Q9 92 15 94 M7 100 H17"/>
 </g>
</svg>
<div style="position:absolute;left:33px;top:772px;width:34px;height:33px;background:#b4b4b4;border-radius:2px"></div>
<div style="position:absolute;left:80px;top:772px;width:33px;height:33px;background:#b4b4b4;border-radius:2px"></div>
<div style="position:absolute;left:120px;top:772px;width:50px;height:33px;background:#b4b4b4;border-radius:2px"></div>
<div style="position:absolute;left:177px;top:772px;width:33px;height:33px;background:#b4b4b4;border-radius:2px"></div>
<div style="position:absolute;left:120px;top:781.5px;width:50px;text-align:center;font-size:12px;color:#f4f4f4">53%</div>
<svg style="left:0;top:-85px" width="1101" height="900">
 <g stroke="#f6f6f6" stroke-width="1.6" fill="none" stroke-linejoin="round">
  <path d="M50 865.3 L40.5 870.2 L50 875 L59.5 870.2 Z"/>
  <path d="M40.5 873.8 L50 878.6 L59.5 873.8 M40.5 877.3 L50 882.2 L59.5 877.3"/>
 </g>
 <path d="M87.5 873.5 H105.5 M184.5 873.5 H202.5 M193.5 864.5 V882.5" stroke="#f6f6f6" stroke-width="2"/>
</svg>
</div>
<div id="panel"></div>
<div id="rightedge"></div>
<div style="position:absolute;left:1101px;top:85px;width:2px;height:815px;background:#272727"></div>
<svg style="left:0;top:0" width="1440" height="900">
 <!-- toolbar icons -->
 <g stroke="#ececec" stroke-width="2" fill="none" stroke-linecap="butt">
  <path d="M10 59 H32 M10 64.8 H32 M10 70.7 H32"/>
 </g>
 <g stroke="#e6e6e6" stroke-width="1.6" fill="none" stroke-linecap="round" stroke-linejoin="round">
  <path d="M94.3 53.5 L88.5 58 L94 62.3 M88.8 58 H102.5 A6.9 6.9 0 0 1 102.5 71.8"/>
 </g>
 <g stroke="#8c8c8c" stroke-width="1.6" fill="none" stroke-linecap="round" stroke-linejoin="round">
  <path d="M174.7 53.5 L180.5 58 L175 62.3 M180.2 58 H167 A6.9 6.9 0 0 0 167 71.8"/>
 </g>
 <g stroke="#e8e8e8" stroke-width="1.5" fill="none">
  <path d="M234.5 55.6 H250.6 M239 55.6 V53.3 H246 V55.6"/>
  <path d="M235.8 56 L236.5 73.8 H249.4 L250 56"/>
  <path d="M240.7 58.5 V70.5 M242.8 58.5 V70.5 M244.9 58.5 V70.5"/>
 </g>
 <!-- select arrow -->
 <path d="M560.3 54.8 L564.6 73 L567.9 68.4 L571.8 73.6 L574.2 71.6 L570.4 66.7 L575.6 64.9 Z" fill="none" stroke="#3aa3dd" stroke-width="1.8" stroke-linejoin="miter"/>
 <rect x="534" y="82.3" width="70" height="2.7" fill="#2f9fd8"/>
 <!-- wall icon -->
 <path d="M630.2 54.6 L635 53.3 L650.8 60.2 V72.6 L646.6 74 L630.2 67.3 Z" fill="#f0f0f0" stroke="#f0f0f0" stroke-width="1.2" stroke-linejoin="round"/>
 <g stroke="#262626" stroke-width="1.3" fill="none" stroke-linecap="butt">
  <path d="M634.3 55.6 L647.5 61.2"/>
  <path d="M631.6 59.4 L637.2 61.8 M639.6 63 L645.4 65.5"/>
  <path d="M631.6 63 L633 63.6 M635.6 64.6 L641.6 67.2"/>
  <path d="M643.8 68.2 L645.2 68.8 M631.6 66.4 L633.2 67 M639.2 70.2 L645 72.6"/>
  <path d="M648.8 62.6 V71.6" stroke-width="1.5"/>
 </g>
 <path d="M646.6 61.4 V74" stroke="#f0f0f0" stroke-width="0.9"/>
 <g stroke="#8a8a8a" stroke-width="1" fill="none">
  <path d="M635.6 58.6 L641.8 61.2 M643.5 62.2 L645.5 63 M631.8 56.8 L632.8 57.2 M631.6 65.4 L637.2 67.8 M639.4 66.8 L640.6 67.3"/>
 </g>
 <g stroke="#cfcfcf" stroke-width="1.3" fill="none">
  <path d="M658.3 61.3 L663 65.8 L667.8 61.3"/>
  <path d="M730.2 61.3 L734.7 65.8 L739.2 61.3"/>
  <path d="M801.9 61.3 L806.4 65.8 L810.9 61.3"/>
  <path d="M1420 61.3 L1424.5 65.6 L1429 61.3"/>
 </g>
 <!-- terrain icon -->
 <g stroke="#ececec" stroke-width="1.4" fill="none" stroke-linejoin="round">
  <path d="M701.8 56.5 L718 56 L722.5 71 L706.5 71.2 L701.5 64.5 Z M701.8 56.5 L706.5 71.2"/>
  <path d="M703.5 59.5 Q708 57.5 711 59.5 T719 58.5 M704.5 63 Q710 61 713 63 T720 62 M705.5 66.5 Q711 64.5 714 66.5 T721 66"/>
 </g>
 <!-- dimension icon -->
 <g stroke="#ececec" stroke-width="1.3" fill="none">
  <path d="M776.8 68.4 L787.4 58.4"/>
  <path d="M784.3 55.3 L792.4 62.8 M790.5 55.3 L786 60 M787.4 54.7 V62.4"/>
  <path d="M773.7 65.2 L781.8 73 M773.7 71.8 L779.5 66 M776.8 64.6 V72.4"/>
  <circle cx="778.8" cy="59" r="2.2"/>
 </g>
 <!-- hand -->
 <g stroke="#ececec" stroke-width="1.5" fill="none" stroke-linejoin="round" stroke-linecap="round">
  <path d="M849.5 65 V57 A1.6 1.6 0 0 1 852.7 57 V63 M852.7 63 V55 A1.6 1.6 0 0 1 855.9 55 V63 M855.9 63 V55.5 A1.6 1.6 0 0 1 859.1 55.5 V63 M859.1 63 V57.5 A1.6 1.6 0 0 1 862.4 57.5 V67 Q862.4 74 856 74 Q851.5 74 849 70.5 L845.3 65.5 Q844.5 63.8 846.3 63.2 Q847.7 63 849.5 65.5"/>
 </g>
 <!-- search -->
 <g stroke="#ececec" stroke-width="1.6" fill="none">
  <circle cx="924.6" cy="61.1" r="7.9"/>
  <path d="M930.3 66.8 L937.8 74.3"/>
 </g>
 <!-- library -->
 <g stroke="#ececec" stroke-width="1.3" fill="none">
  <rect x="1250.2" y="55.8" width="3.6" height="17.8"/>
  <rect x="1255.8" y="55.8" width="3.6" height="17.8"/>
  <path d="M1260.3 55.8 L1263.8 55.8 L1269 73.6 L1265.5 73.6 Z"/>
 </g>
 <!-- info -->
 <g stroke="#3aa3dd" stroke-width="1.4" fill="none">
  <circle cx="1330.6" cy="55.8" r="2.1"/>
  <path d="M1326.3 60.2 H1332.6 V71.6 H1335.6 V74.4 H1325.6 V71.6 H1328.8 V62.6 H1326.3 Z"/>
 </g>
 <rect x="1295" y="82.3" width="70" height="2.7" fill="#2f9fd8"/>
 <!-- floorplan -->
 <g stroke="#ececec" stroke-width="1.4" fill="none">
  <path d="M1402.3 72.4 H1392.7 V54.7 H1411 V72.4 H1406.4 M1401.4 54.7 V59.6 M1401.4 64 V67.4 H1392.7"/>
 </g>
 <!-- panel lines -->
 <line x1="1101" y1="85.5" x2="1437" y2="85.5" stroke="#8a8a8a" stroke-width="1"/>
 <rect x="1101" y="125" width="56.5" height="2.6" fill="#3ba0d6"/>
 <line x1="1157" y1="127.5" x2="1437" y2="127.5" stroke="#858585" stroke-width="1"/>
 <!-- caliper -->
 <g stroke="#3ba6dd" stroke-width="1.3" fill="none" stroke-linejoin="round">
  <path d="M1125.7 96.6 L1118.6 100.6 V106 L1121.8 115.8 H1125.7 Z"/>
  <path d="M1127.8 96.6 V116 H1131.4 L1134.4 108 H1138.8 V101.4 L1127.8 96.6"/>
  <path d="M1124.2 101.4 H1138.8 M1124.2 101.4 V105 M1127.8 108 H1134.4"/>
  <path d="M1130.6 104.5 V107 M1133.6 104.5 V107"/>
 </g>
 <!-- stamp -->
 <g stroke="#ececec" stroke-width="1.5" fill="none" stroke-linejoin="round">
  <path d="M1182.3 108.2 V99 A2.6 2.6 0 0 1 1187.5 99 V108.2"/>
  <path d="M1178.3 108.2 H1192.3 V110.3 H1178.3 Z"/>
  <path d="M1178.3 110.3 L1176.5 116.5 H1193.8 L1192.3 110.3 M1189.2 110.3 V116.5"/>
 </g>
 <!-- pencil -->
 <g stroke="#ececec" stroke-width="1.4" fill="none" stroke-linejoin="round">
  <path d="M1231.4 116.1 V108.4 L1242.6 97.2 Q1245.5 94.5 1248.5 97.2 L1250.6 99.3 Q1253.3 102 1250.6 105 L1239.3 116.1 Z"/>
  <path d="M1240.6 99.3 L1248.1 106.8"/>
  <path d="M1231.6 108.8 H1235 V112.2 H1238.6 V116"/>
 </g>
 <!-- camera -->
 <g stroke="#ececec" stroke-width="1.4" fill="none">
  <path d="M1289 99.6 H1294.5 L1295.5 97.6 H1303.5 L1304.5 99.6 H1306.5 Q1308 99.6 1308 101.2 V113.3 Q1308 114.8 1306.5 114.8 H1289 Q1287.4 114.8 1287.4 113.3 V101.2 Q1287.4 99.6 1289 99.6 Z"/>
  <circle cx="1299.3" cy="107.6" r="4.7" stroke-width="1.6"/>
  <rect x="1289.8" y="102.6" width="1.6" height="1.6"/>
  <path d="M1297.6 109.2 L1300.6 106.2" stroke-width="1.1"/>
 </g>
 <!-- sun -->
 <g stroke="#ececec" stroke-width="1.5" fill="none">
  <circle cx="1354" cy="105.7" r="4.6"/>
  <path d="M1354 96 V99 M1354 112.4 V115.6 M1344.2 105.7 H1347.3 M1360.7 105.7 H1363.8 M1347.1 98.8 L1349.2 100.9 M1358.8 110.5 L1360.9 112.6 M1360.9 98.8 L1358.8 100.9 M1349.2 110.5 L1347.1 112.6"/>
 </g>
 <!-- house -->
 <g stroke="#ececec" stroke-width="1.4" fill="none" stroke-linejoin="round">
  <path d="M1399.3 104.8 L1409.7 96.3 L1419.8 104.8 Z"/>
  <path d="M1400.5 104.8 V115.6 H1419 V104.8"/>
  <rect x="1403.4" y="108.8" width="3.2" height="3.2"/>
  <path d="M1412.4 115.6 V107.8 H1416 V115.6"/>
 </g>
</svg>
<!-- dropdown 1 -->
<div class="dd" style="left:1113px;top:132.5px;width:312px;height:33px"></div>
<svg style="left:0;top:0" width="1440" height="900">
 <g stroke="#ececec" stroke-width="1.6" fill="none" stroke-linejoin="round">
  <path d="M1126.2 140.6 H1142 L1145 152 L1146.5 155.2 H1130.2 L1126.5 150 Z"/>
  <path d="M1127 143.8 Q1135 142.5 1143 144.2 M1127.3 147.2 Q1136 145.8 1144 147.8 M1128.5 150.8 Q1134 148.5 1139 151 T1146 151.5"/>
 </g>
 <path d="M1402 145.5 L1408 151.5 L1414.3 145.5" stroke="#e6e6e6" stroke-width="1.4" fill="none"/>
</svg>
<div class="lbl" style="left:1159px;top:139.5px;font-size:14.4px">Elevation Lines &amp; Points</div>
<svg style="left:0;top:0" width="1440" height="900">
 <path d="M1176 253.6 L1192.8 248.4 M1176 302.4 L1224.2 288.5" stroke="#8a8a8a" stroke-width="1.2" fill="none"/>
 <path d="M1192.8 217.8 L1273.6 195.2 C1276.1 196.1 1284.4 198.3 1288.9 200.8 C1293.4 203.3 1296.8 206.4 1300.7 210.3 C1304.6 214.2 1308.6 219.6 1312.5 224.5 C1316.4 229.4 1320.4 235.5 1324.3 239.8 C1328.2 244.1 1332.1 247.5 1336.1 250.4 C1340.0 253.3 1343.3 255.6 1348.0 257.5 C1352.7 259.4 1361.5 261.1 1364.2 261.8 L1364.2 276.1 L1284 308.2 L1192.8 278.3 Z" fill="#16212d" stroke="#16212d" stroke-width="2.6" stroke-linejoin="round"/>
 <path d="M1192.8 217.8 L1273.6 195.2 C1276.1 196.1 1284.4 198.3 1288.9 200.8 C1293.4 203.3 1296.8 206.4 1300.7 210.3 C1304.6 214.2 1308.6 219.6 1312.5 224.5 C1316.4 229.4 1320.4 235.5 1324.3 239.8 C1328.2 244.1 1332.1 247.5 1336.1 250.4 C1340.0 253.3 1343.3 255.6 1348.0 257.5 C1352.7 259.4 1361.5 261.1 1364.2 261.8 L1284 290.7 C1280.9 289.5 1270.4 286.3 1265.3 283.5 C1260.2 280.7 1257.4 278.1 1253.5 274.0 C1249.6 269.9 1245.6 263.8 1241.7 258.7 C1237.8 253.6 1233.8 247.8 1229.9 243.3 C1226.0 238.8 1222.0 234.8 1218.1 231.5 C1214.2 228.2 1210.5 225.6 1206.3 223.3 C1202.1 221.0 1195.0 218.7 1192.8 217.8 Z" fill="#8cc6f1" stroke="#8cc6f1" stroke-width="0.7"/>
 <path d="M1192.8 217.8 C1195.0 218.7 1202.1 221.0 1206.3 223.3 C1210.5 225.6 1214.2 228.2 1218.1 231.5 C1222.0 234.8 1226.0 238.8 1229.9 243.3 C1233.8 247.8 1237.8 253.6 1241.7 258.7 C1245.6 263.8 1249.6 269.9 1253.5 274.0 C1257.4 278.1 1260.2 280.7 1265.3 283.5 C1270.4 286.3 1280.9 289.5 1284.0 290.7 L1284 308.2 L1192.8 278.3 Z" fill="#6ba8e2" stroke="#6ba8e2" stroke-width="0.7"/>
 <path d="M1284 290.7 L1364.2 261.8 L1364.2 276.1 L1284 308.2 Z" fill="#4f8fd6" stroke="#4f8fd6" stroke-width="0.7"/>
 <clipPath id="topclip"><path d="M1192.8 217.8 L1273.6 195.2 C1276.1 196.1 1284.4 198.3 1288.9 200.8 C1293.4 203.3 1296.8 206.4 1300.7 210.3 C1304.6 214.2 1308.6 219.6 1312.5 224.5 C1316.4 229.4 1320.4 235.5 1324.3 239.8 C1328.2 244.1 1332.1 247.5 1336.1 250.4 C1340.0 253.3 1343.3 255.6 1348.0 257.5 C1352.7 259.4 1361.5 261.1 1364.2 261.8 L1284 290.7 C1280.9 289.5 1270.4 286.3 1265.3 283.5 C1260.2 280.7 1257.4 278.1 1253.5 274.0 C1249.6 269.9 1245.6 263.8 1241.7 258.7 C1237.8 253.6 1233.8 247.8 1229.9 243.3 C1226.0 238.8 1222.0 234.8 1218.1 231.5 C1214.2 228.2 1210.5 225.6 1206.3 223.3 C1202.1 221.0 1195.0 218.7 1192.8 217.8 Z"/></clipPath>
 <g stroke="#5290d2" stroke-width="1.4" fill="none" stroke-linecap="round" clip-path="url(#topclip)">
  <path d="M1211 225.6 Q1225 219 1245 213 Q1262 208 1270 206.5 Q1280 204 1288 201.5"/>
  <path d="M1225 238.6 Q1240 231 1262 226 Q1285 222 1306 216" stroke-width="2"/>
  <path d="M1239.3 252.8 Q1255 245 1275 242 Q1300 238 1318 231"/>
  <path d="M1251 267 Q1268 259 1290 255 Q1312 252 1331 245.5"/>
  <path d="M1265.3 281 Q1285 273 1305 269 Q1330 265 1349 258"/>
 </g>
 <path d="M1178.2 302.4 V257" stroke="#3a9de0" stroke-width="1.3"/>
 <circle cx="1178.2" cy="256.8" r="1.6" fill="#3a9de0"/>
 <path d="M1176 253.6 H1179 M1176 302.4 H1179" stroke="#8a8a8a" stroke-width="1.2"/>
</svg>
<div class="lbl" style="left:1167px;top:269.5px;font-size:13px">E</div>

<svg style="left:0;top:0" width="1440" height="900">
 <g stroke="#e6e6e6" stroke-width="1.5" fill="none">
  <rect x="1115.4" y="349.4" width="16.5" height="10.8"/>
  <path d="M1127.2 349.4 V346.5 A5 5 0 0 1 1137.2 346.5 V347.5"/>
  <rect x="1115.4" y="391.8" width="16.5" height="10.5"/>
  <path d="M1127.2 391.8 V388.5 A5 5 0 0 1 1137.2 388.5 V389.5"/>
 </g>
</svg>
<div class="lbl" style="left:1202px;top:343.5px">Elevation</div>
<div style="position:absolute;left:1202.5px;top:358px;width:5px;height:1.5px;background:#ccc"></div>
<div class="dd" style="left:1269px;top:335px;width:156px;height:33px;background:#1b1b1b"></div>
<div style="position:absolute;left:1352.5px;top:336px;width:71.5px;height:31px;background:#2b2b2b;border-left:1px solid #7a7a7a;border-radius:0 2px 2px 0"></div>
<div style="position:absolute;left:1388.5px;top:336px;width:1px;height:31px;background:#7a7a7a"></div>
<div class="lbl" style="left:1271.5px;top:340.5px;font-size:14.4px">0' 0"</div>
<svg style="left:0;top:0" width="1440" height="900">
 <path d="M1361.5 351.2 H1380.5" stroke="#e8e8e8" stroke-width="1.8"/>
 <path d="M1397.5 351.2 H1415.5 M1406.5 342.3 V360.2" stroke="#e8e8e8" stroke-width="1.8"/>
</svg>
<div class="lbl" style="left:1142.5px;top:385px">Edit Geometry</div>
<div class="lbl" style="left:1180px;top:429px">Smoothness</div>
<svg style="left:0;top:0" width="1440" height="900">
 <rect x="1269" y="432.8" width="156" height="2" rx="1" fill="#8a8a8a"/>
 <rect x="1269" y="432.8" width="78" height="2" rx="1" fill="#27a0dc"/>
 <circle cx="1346.8" cy="433.8" r="10.3" fill="#17a7f0"/>
</svg>
<div class="lbl" style="left:1113px;top:479px;font-size:19.5px">Text</div>
<div class="dd" style="left:1269px;top:472px;width:156px;height:32.5px"></div>
<div class="lbl" style="left:1281.5px;top:479.5px">Elevation</div>
<div class="dd" style="left:1113px;top:514px;width:312px;height:33px"></div>
<div class="lbl" style="left:1124.5px;top:524px;color:#c8c8c8">Type your note here</div>
<div class="lbl" style="left:1200px;top:566px">Font Size</div>
<div class="dd" style="left:1269px;top:556.5px;width:156px;height:33px"></div>
<div class="lbl" style="left:1281.5px;top:565px">9</div>
<div class="lbl" style="left:1192px;top:608px">Font Color</div>
<div style="position:absolute;left:1269px;top:598px;width:156px;height:33.5px;background:#676767;border-radius:3px"></div>
<svg style="left:0;top:0" width="1440" height="900">
 <path d="M1402 485.5 L1408 491.5 L1414.3 485.5 M1402 569.5 L1408 575.5 L1414.3 569.5" stroke="#e6e6e6" stroke-width="1.4" fill="none"/>
</svg>

</body></html>
